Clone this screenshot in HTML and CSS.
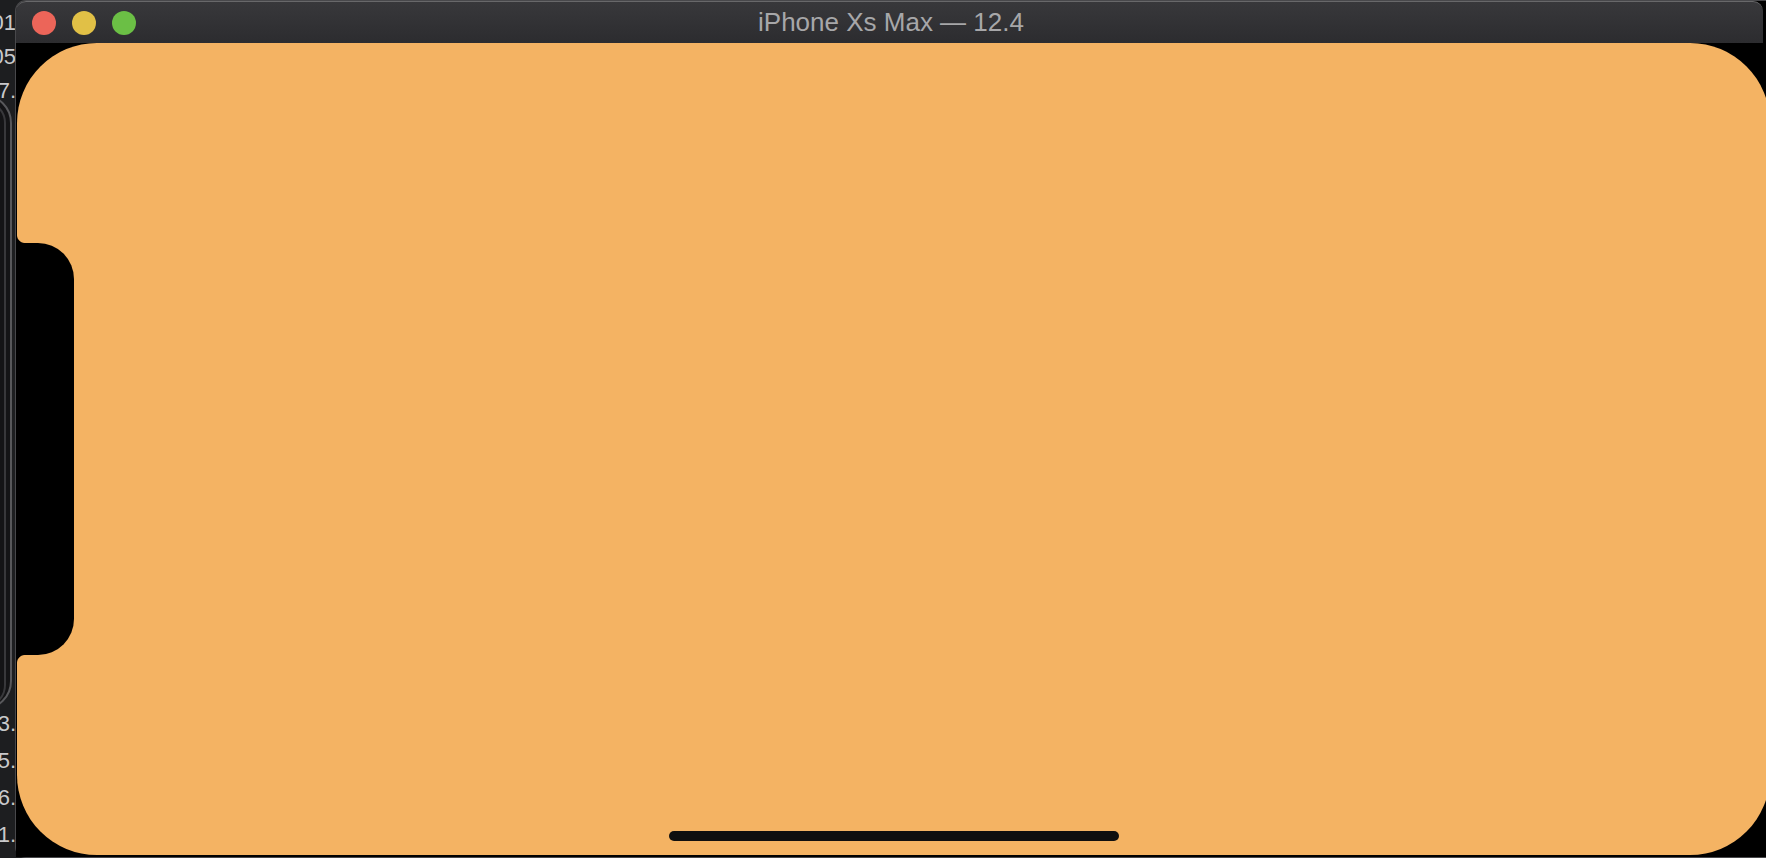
FILE: index.html
```html
<!DOCTYPE html>
<html>
<head>
<meta charset="utf-8">
<title>iPhone Xs Max — 12.4</title>
<link rel="stylesheet" href="styles.css">
</head>
<body>
<div class="desktop">
  <div class="bg-text bg-top">
    <div>01</div>
    <div>05</div>
    <div>7.</div>
  </div>
  <div class="bg-bezel"><div class="bg-bezel-inner"></div></div>
  <div class="bg-text bg-bottom">
    <div>3.</div>
    <div>5.</div>
    <div>6.</div>
    <div>1.</div>
  </div>

  <div class="window">
    <div class="titlebar">
      <div class="lights">
        <span class="light red"></span>
        <span class="light yellow"></span>
        <span class="light green"></span>
      </div>
      <div class="title">iPhone Xs Max — 12.4</div>
    </div>
    <div class="screen">
      <div class="display">
        <div class="notch"></div>
        <div class="home-indicator"></div>
      </div>
    </div>
  </div>
</div>
</body>
</html>
```

FILE: styles.css
```css
html, body {
  margin: 0;
  padding: 0;
}

body {
  width: 1766px;
  height: 858px;
  overflow: hidden;
  background: #1d1e20;
  font-family: "Liberation Sans", Arial, sans-serif;
}

.desktop {
  position: relative;
  width: 1766px;
  height: 858px;
  overflow: hidden;
}

.bg-text {
  position: absolute;
  right: calc(1766px - 16px);
  color: #c9c9cb;
  font-size: 22px;
  white-space: nowrap;
  text-align: right;
}

.bg-top {
  top: 6px;
  line-height: 34px;
}

.bg-bottom {
  top: 705px;
  line-height: 37px;
}

.bg-bezel {
  position: absolute;
  left: -46px;
  top: 94px;
  width: 54px;
  height: 612px;
  border: 2px solid #58585b;
  border-radius: 36px;
  background: #141416;
}

.bg-bezel-inner {
  margin: 4px;
  height: calc(100% - 8px);
  border: 2px solid #38383b;
  border-radius: 32px;
}

.window {
  position: absolute;
  left: 16px;
  top: 1px;
  width: 1760px;
  height: 856px;
  display: flex;
  flex-direction: column;
  background: #000;
  border-radius: 10px;
  box-shadow: 0 0 0 1px #48484b;
}

.titlebar {
  position: relative;
  flex: 0 0 42px;
  width: 1747px;
  display: flex;
  align-items: center;
  background: linear-gradient(#38383b, #2c2c2f);
  border-top: 1px solid #68686a;
  border-radius: 10px 10px 0 0;
  box-sizing: border-box;
}

.lights {
  display: flex;
  gap: 16px;
  padding-left: 16px;
}

.light {
  width: 24px;
  height: 24px;
  border-radius: 50%;
}

.red { background: #ec6559; }
.yellow { background: #e1c046; }
.green { background: #6bbf45; }

.title {
  position: absolute;
  left: 0;
  right: -3px;
  top: 0;
  bottom: 0;
  display: flex;
  align-items: center;
  justify-content: center;
  color: #a7a7a9;
  font-size: 26px;
  pointer-events: none;
}

.screen {
  flex: 1;
  display: flex;
  padding: 0 0 0 1px;
  background: #000;
}

.display {
  position: relative;
  width: 1753px;
  height: 812px;
  flex: 0 0 auto;
  background: #f4b363;
  border-radius: 80px;
  display: flex;
  flex-direction: column;
  justify-content: flex-end;
  align-items: center;
  padding-bottom: 14px;
  box-sizing: border-box;
}

.notch {
  position: absolute;
  left: 0;
  top: 200px;
  width: 57px;
  height: 412px;
  background: #000;
  border-radius: 0 36px 36px 0;
}

.notch::before,
.notch::after {
  content: "";
  position: absolute;
  left: 0;
  width: 8px;
  height: 8px;
}

.notch::before {
  top: -8px;
  background: radial-gradient(circle at 100% 0, transparent 7.5px, #000 8.5px);
}

.notch::after {
  bottom: -8px;
  background: radial-gradient(circle at 100% 100%, transparent 7.5px, #000 8.5px);
}

.home-indicator {
  width: 450px;
  height: 10px;
  border-radius: 5px;
  background: #0f0f0f;
}
```
